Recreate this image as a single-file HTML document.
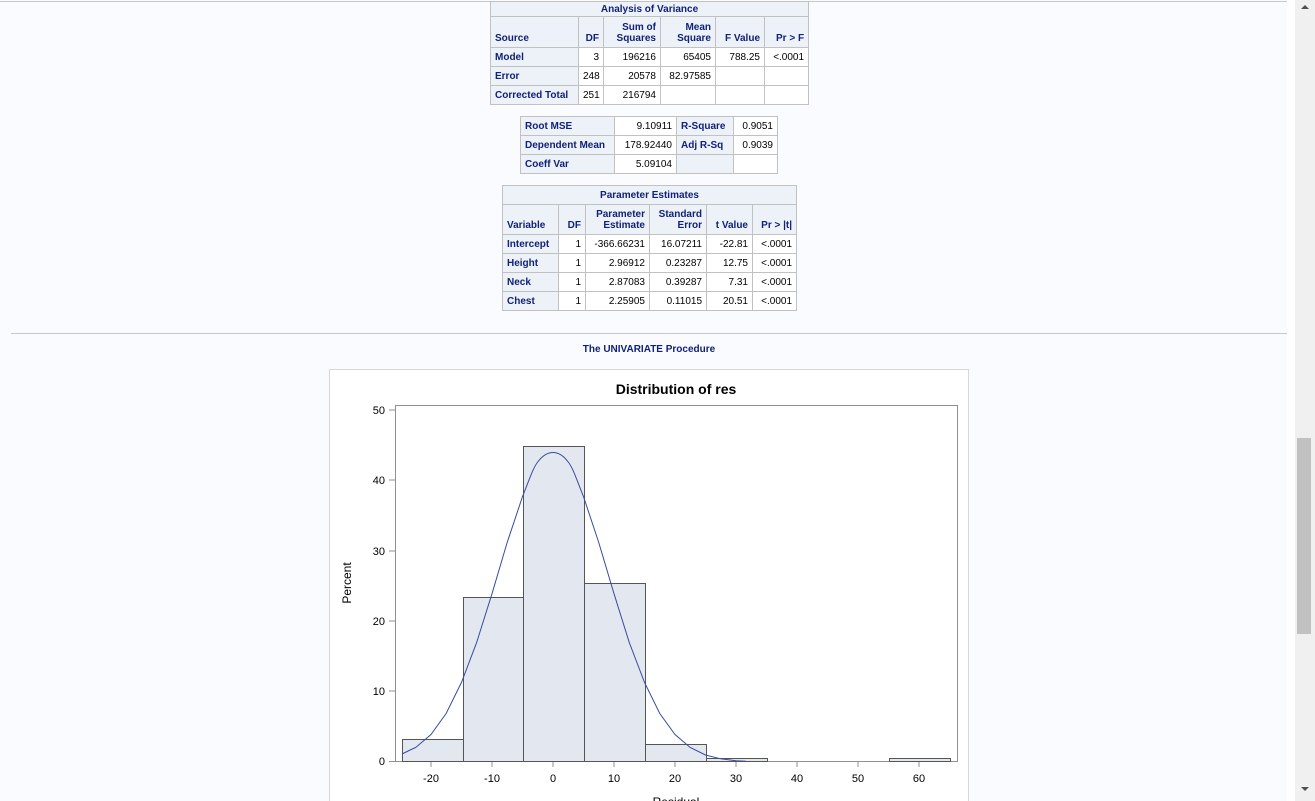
<!DOCTYPE html>
<html><head><style>
body{margin:0;width:1315px;height:801px;overflow:hidden;background:#fafbfe;position:relative;font-family:"Liberation Sans",Arial,sans-serif}
.sb{position:absolute;left:1295px;top:0;width:20px;height:801px;background:#f0f0f0}
.ws{position:absolute;left:1287px;top:0;width:8px;height:801px;background:#fff}
table{position:absolute;border-collapse:collapse;font-size:10px;table-layout:fixed}
td{border:1px solid #c1c1c1;padding:0 4px;height:18px;background:#fff;color:#000;text-align:right;white-space:nowrap;overflow:hidden}
td.h{background:#edf2f9;color:#112277;font-weight:bold}
td.l{text-align:left}
td.c{text-align:center}
tr.hd td{vertical-align:bottom;padding-bottom:3px;line-height:11px}
.t{color:#112277;font-weight:bold;font-size:10px;position:absolute}
</style></head><body>
<div style="position:absolute;left:0;top:1px;width:1295px;height:1px;background:#c8c8c8"></div>
<table style="left:490px;top:1px;width:319px">
<colgroup><col style="width:88px"><col style="width:25px"><col style="width:57px"><col style="width:55px"><col style="width:49px"><col style="width:44px"></colgroup>
<tr><td class="h c" colspan="6" style="height:14px">Analysis of Variance</td></tr>
<tr class="hd"><td class="h l" style="height:27px">Source</td><td class="h">DF</td><td class="h">Sum of<br>Squares</td><td class="h">Mean<br>Square</td><td class="h">F Value</td><td class="h">Pr &gt; F</td></tr>
<tr><td class="h l">Model</td><td>3</td><td>196216</td><td>65405</td><td>788.25</td><td>&lt;.0001</td></tr>
<tr><td class="h l">Error</td><td>248</td><td>20578</td><td>82.97585</td><td></td><td></td></tr>
<tr><td class="h l">Corrected Total</td><td>251</td><td>216794</td><td></td><td></td><td></td></tr>
</table>
<table style="left:520px;top:116px;width:258px">
<colgroup><col style="width:94px"><col style="width:62px"><col style="width:57px"><col style="width:44px"></colgroup>
<tr><td class="h l">Root MSE</td><td>9.10911</td><td class="h l">R-Square</td><td>0.9051</td></tr>
<tr><td class="h l">Dependent Mean</td><td>178.92440</td><td class="h l">Adj R-Sq</td><td>0.9039</td></tr>
<tr><td class="h l">Coeff Var</td><td>5.09104</td><td class="h"></td><td></td></tr>
</table>
<table style="left:502px;top:185px;width:295px">
<colgroup><col style="width:56px"><col style="width:27px"><col style="width:64px"><col style="width:57px"><col style="width:46px"><col style="width:44px"></colgroup>
<tr><td class="h c" colspan="6">Parameter Estimates</td></tr>
<tr class="hd"><td class="h l" style="height:26px">Variable</td><td class="h">DF</td><td class="h">Parameter<br>Estimate</td><td class="h">Standard<br>Error</td><td class="h">t Value</td><td class="h">Pr &gt; |t|</td></tr>
<tr><td class="h l">Intercept</td><td>1</td><td>-366.66231</td><td>16.07211</td><td>-22.81</td><td>&lt;.0001</td></tr>
<tr><td class="h l">Height</td><td>1</td><td>2.96912</td><td>0.23287</td><td>12.75</td><td>&lt;.0001</td></tr>
<tr><td class="h l">Neck</td><td>1</td><td>2.87083</td><td>0.39287</td><td>7.31</td><td>&lt;.0001</td></tr>
<tr><td class="h l">Chest</td><td>1</td><td>2.25905</td><td>0.11015</td><td>20.51</td><td>&lt;.0001</td></tr>
</table>
<div style="position:absolute;left:11px;top:333px;width:1276px;height:1px;background:#c8c8c8"></div>
<div class="t" style="left:0;width:1298px;text-align:center;top:344px">The UNIVARIATE Procedure</div>
<svg style="position:absolute;left:0;top:0" width="1287" height="801" font-family="Liberation Sans,Arial,sans-serif">
<rect x="329.5" y="369.5" width="639" height="440" fill="#fff" stroke="#d8d8d8"/>
<text x="676" y="394" text-anchor="middle" font-size="14" font-weight="bold">Distribution of res</text>
<text transform="translate(351,583) rotate(-90)" text-anchor="middle" font-size="12">Percent</text>
<text x="676" y="806" text-anchor="middle" font-size="12">Residual</text>
<rect x="395.5" y="405.5" width="562" height="356" fill="#fff" stroke="#909090"/>
<g stroke="#909090">
<line x1="389" y1="410" x2="395" y2="410"/><line x1="389" y1="480" x2="395" y2="480"/><line x1="389" y1="551" x2="395" y2="551"/><line x1="389" y1="621" x2="395" y2="621"/><line x1="389" y1="691" x2="395" y2="691"/><line x1="389" y1="761.5" x2="395" y2="761.5"/>
<line x1="431" y1="762" x2="431" y2="767"/><line x1="492" y1="762" x2="492" y2="767"/><line x1="553" y1="762" x2="553" y2="767"/><line x1="614" y1="762" x2="614" y2="767"/><line x1="675" y1="762" x2="675" y2="767"/><line x1="736" y1="762" x2="736" y2="767"/><line x1="797" y1="762" x2="797" y2="767"/><line x1="858" y1="762" x2="858" y2="767"/><line x1="919" y1="762" x2="919" y2="767"/>
</g>
<g font-size="11" text-anchor="end">
<text x="385" y="414">50</text><text x="385" y="484">40</text><text x="385" y="555">30</text><text x="385" y="625">20</text><text x="385" y="695">10</text><text x="385" y="765">0</text>
</g>
<g font-size="11" text-anchor="middle">
<text x="431" y="782">-20</text><text x="492" y="782">-10</text><text x="553" y="782">0</text><text x="614" y="782">10</text><text x="675" y="782">20</text><text x="736" y="782">30</text><text x="797" y="782">40</text><text x="858" y="782">50</text><text x="919" y="782">60</text>
</g>
<g fill="#e3e7f0" stroke="#555" stroke-width="1">
<rect x="402.5" y="739.5" width="61" height="22"/>
<rect x="463.5" y="597.5" width="60" height="164"/>
<rect x="523.5" y="446.5" width="61" height="315"/>
<rect x="584.5" y="583.5" width="61" height="178"/>
<rect x="645.5" y="744.5" width="61" height="17"/>
<rect x="706.5" y="758.5" width="61" height="3"/>
<rect x="889.5" y="758.5" width="61" height="3"/>
</g>
<path fill="none" stroke="#3a4c9c" stroke-width="1" d="M402,754 C408,751 412,749 415.7,747.5 L431,734.5 L446.2,713.4 L461.5,682.4 L476.7,642.3 L492,593.7 L507.2,542.4 L522.5,496.6 C530,478 533,468 537.7,462 C543,455 548,452.5 553,452.5 C558,452.5 563,455 568.2,462 C573,468 576,478 583.5,496.6 L598.7,542.4 L614,593.7 L629.2,642.3 L644.5,682.4 L659.7,713.4 L675,734.5 L690.2,747.5 L705.5,755 L720.7,758.8 L736,760.7 L746,761.3"/>
</svg>
<div class="ws"></div>
<div class="sb"><div style="position:absolute;left:2px;top:438px;width:14px;height:196px;background:#c1c1c1"></div>
<div style="position:absolute;left:6px;top:5px;width:0;height:0;border-left:4px solid transparent;border-right:4px solid transparent;border-bottom:4px solid #505050"></div>
<div style="position:absolute;left:6px;top:787px;width:0;height:0;border-left:4px solid transparent;border-right:4px solid transparent;border-top:4px solid #505050"></div></div>
</body></html>
